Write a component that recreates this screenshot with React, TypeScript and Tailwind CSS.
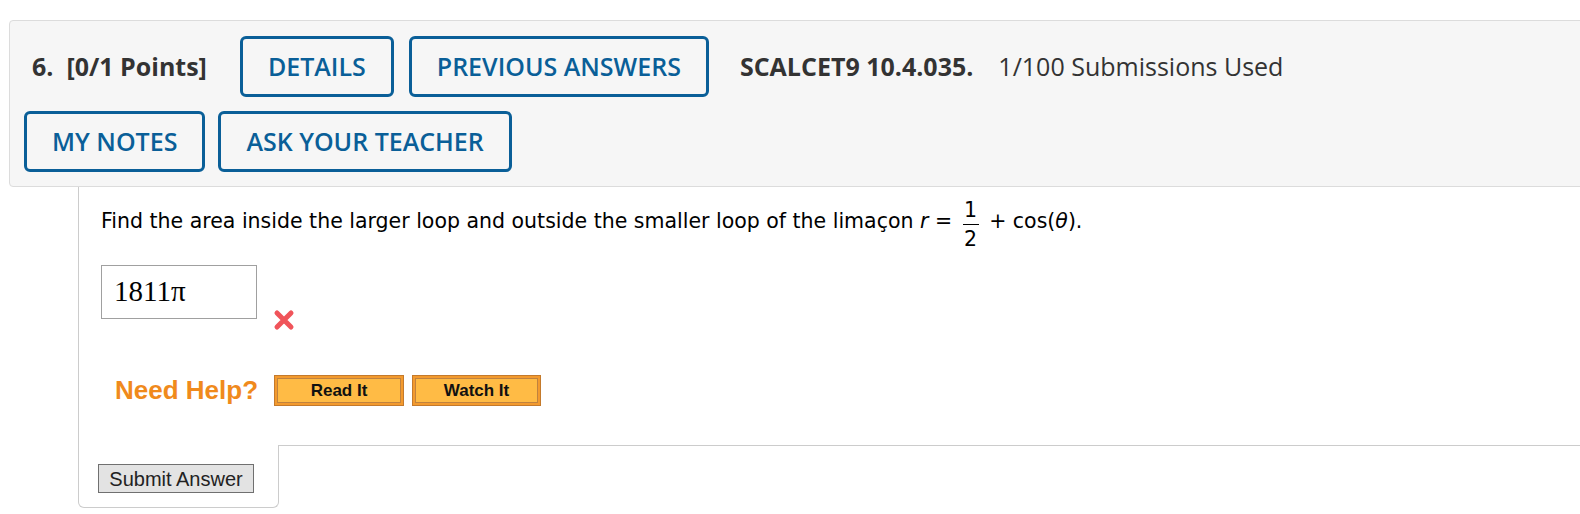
import React from 'react'

const outline =
  "h-[61px] px-[25px] rounded-[6px] border-[3px] border-[#0a5f98] text-[#0a5f98] text-[25px] font-semibold bg-transparent flex items-center"

function OrangeButton({ label, w }: { label: string; w: string }) {
  return (
    <button className={`${w} h-[31px] border border-[#c47a2c] bg-[#f39a2e] p-[2px] flex`}>
      <span className="flex-1 flex items-center justify-center border border-[#c0823f] bg-[#ffbb45] text-[17px] font-bold text-[#111] font-['Liberation_Sans',Arial,sans-serif]">
        {label}
      </span>
    </button>
  )
}

export default function App() {
  return (
    <div className="w-[1580px] h-[514px] overflow-hidden bg-white pt-[20px] pl-[9px]">
      {/* header panel */}
      <div className="w-[1600px] border border-[#dcdcdc] rounded-[4px] bg-[#f6f6f6] pt-[15px] pb-[14px] pl-[14px] font-['Open_Sans',sans-serif] text-[#333]">
        <div className="flex items-center">
          <span className="ml-[8px] text-[25px] font-bold mr-[33px]">6.&nbsp; [0/1 Points]</span>
          <button className={outline}>DETAILS</button>
          <button className={`${outline} ml-[15px]`}>PREVIOUS ANSWERS</button>
          <span className="ml-[31px] text-[25px] font-bold">SCALCET9 10.4.035.</span>
          <span className="ml-[25px] text-[25px]">1/100 Submissions Used</span>
        </div>
        <div className="flex items-center mt-[14px]">
          <button className={`${outline} px-[25px]`}>MY NOTES</button>
          <button className={`${outline} ml-[13px]`}>ASK YOUR TEACHER</button>
        </div>
      </div>

      {/* question body */}
      <div className="ml-[69px]">
        <div className="h-[258px] border-l border-[#cccccc] pl-[22px] pt-[11px]">
          <p className="text-[20.5px] text-black font-['DejaVu_Sans',Verdana,sans-serif] flex items-center">
            <span className="mb-[6px]">Find the area inside the larger loop and outside the smaller loop of the limaçon <i>r</i> =&nbsp;</span>
            <span className="inline-flex flex-col items-center mx-[4px] leading-[24px]">
              <span>1</span>
              <span className="w-[16px] h-px bg-black my-[2px]"></span>
              <span>2</span>
            </span>
            <span className="mb-[6px]">&nbsp;+ cos(<i>θ</i>).</span>
          </p>
          <div className="flex mt-[14px]">
            <div className="w-[156px] h-[54px] border border-[#a0a0a0] flex items-center pl-[12px] text-[29px] text-black font-['Liberation_Serif','Times_New_Roman',serif]">
              1811π
            </div>
            <svg className="mt-[44px] ml-[16px]" width="22" height="22" viewBox="0 0 22 22">
              <path d="M4 4 L18 18 M18 4 L4 18" stroke="#f0545a" strokeWidth="5" strokeLinecap="round" />
            </svg>
          </div>
          <div className="flex items-center mt-[40px] ml-[14px]">
            <span className="text-[26px] font-bold text-[#f08a1c] font-['Liberation_Sans',Arial,sans-serif] mr-[16px]">Need Help?</span>
            <OrangeButton label="Read It" w="w-[130px]" />
            <span className="w-[8px]"></span>
            <OrangeButton label="Watch It" w="w-[129px]" />
          </div>
        </div>
        <div className="flex">
          <div className="w-[201px] h-[63px] border-l border-b border-r border-[#cccccc] rounded-b-[6px] pl-[19px] pt-[19px]">
            <button className="w-[156px] h-[29px] border border-[#707070] bg-[#e3e3e3] text-[20px] text-[#222] font-['Liberation_Sans',Arial,sans-serif] leading-none">
              Submit Answer
            </button>
          </div>
          <div className="flex-1 border-t border-[#cccccc]"></div>
        </div>
      </div>
    </div>
  )
}
